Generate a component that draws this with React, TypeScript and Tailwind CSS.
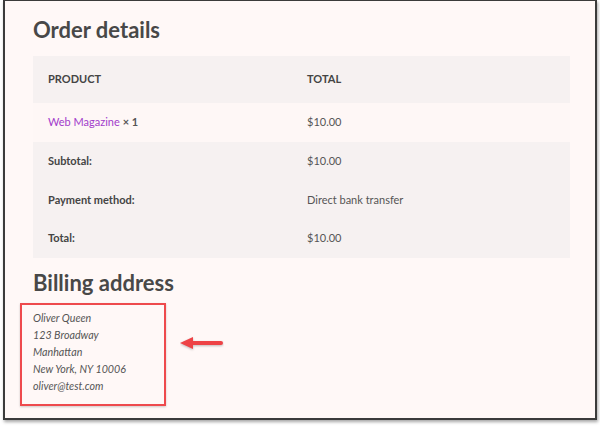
const rows = [
  { label: "Subtotal:", value: "$10.00" },
  { label: "Payment method:", value: "Direct bank transfer" },
  { label: "Total:", value: "$10.00" },
];

const address = [
  "Oliver Queen",
  "123 Broadway",
  "Manhattan",
  "New York, NY 10006",
  "oliver@test.com",
];

const App = () => {
  return (
    <div className="w-[600px] h-[427px] overflow-hidden bg-white font-['Lato',sans-serif]">
      <div className="ml-[3px] w-[594px] h-[420px] border-x-2 border-b-2 border-t border-[#3b3b3b] bg-[#fff8f7] pl-[28px] pr-[25px] shadow-[1px_2px_3px_rgba(0,0,0,0.35)]">
        <h2 className="pt-[15px] mb-[12px] text-[22px] leading-[28px] font-bold text-[#484848]">
          Order details
        </h2>

        <div className="text-[11px] text-[#555]">
          <div className="grid grid-cols-[259px_1fr] h-[47px] items-center bg-[#f6f1f1] font-bold text-[#444] uppercase">
            <div className="pl-[15px]">Product</div>
            <div className="pl-[15px]">Total</div>
          </div>
          <div className="grid grid-cols-[259px_1fr] h-[39px] items-center bg-[#fef7f6]">
            <div className="pl-[15px]">
              <span className="text-[#a23ccb]">Web Magazine</span>{" "}
              <span className="font-bold text-[#555]">× 1</span>
            </div>
            <div className="pl-[15px]">$10.00</div>
          </div>
          <div className="bg-[#f6f1f1]">
            {rows.map((row) => (
              <div
                key={row.label}
                className="grid grid-cols-[259px_1fr] h-[38.67px] items-center"
              >
                <div className="pl-[15px] font-bold text-[#444]">{row.label}</div>
                <div className="pl-[15px]">{row.value}</div>
              </div>
            ))}
          </div>
        </div>

        <h2 className="mt-[11px] text-[22px] leading-[28px] font-bold text-[#484848]">
          Billing address
        </h2>

        <div className="flex items-start mt-[6px]">
          <div className="-ml-[13px] w-[146px] h-[103px] border-2 border-[#ee4a4d] pl-[11px] pt-[4px] shadow-[0_1px_2px_rgba(0,0,0,0.2)]">
            {address.map((line) => (
              <div key={line} className="text-[10.7px] leading-[17px] italic text-[#555]">
                {line}
              </div>
            ))}
          </div>
          <svg
            className="ml-[14px] mt-[33px]"
            width="44"
            height="16"
            viewBox="0 0 44 16"
          >
            <g fill="#ee4346" style={{ filter: "drop-shadow(0 1px 1px rgba(0,0,0,0.25))" }}>
              <path d="M0 7 L13 1 L13 13 Z" />
              <rect x="11" y="5" width="32" height="4" rx="2" />
            </g>
          </svg>
        </div>
      </div>
    </div>
  );
};

export default App;
